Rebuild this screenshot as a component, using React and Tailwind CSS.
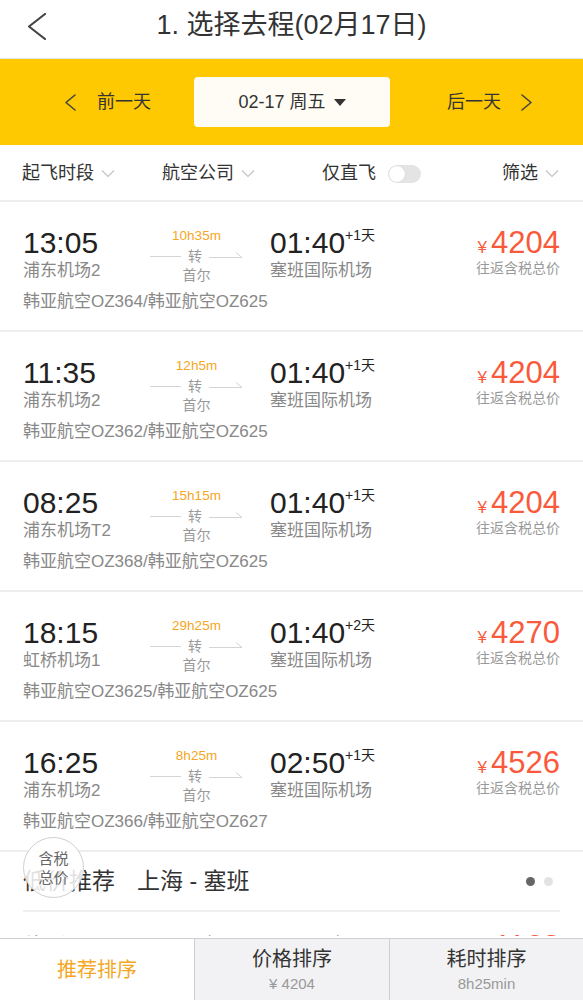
import React from "react";

const flights = [
  { dep: "13:05", depAp: "浦东机场2", dur: "10h35m", arr: "01:40", plus: "+1天", price: "4204", airline: "韩亚航空OZ364/韩亚航空OZ625" },
  { dep: "11:35", depAp: "浦东机场2", dur: "12h5m", arr: "01:40", plus: "+1天", price: "4204", airline: "韩亚航空OZ362/韩亚航空OZ625" },
  { dep: "08:25", depAp: "浦东机场T2", dur: "15h15m", arr: "01:40", plus: "+1天", price: "4204", airline: "韩亚航空OZ368/韩亚航空OZ625" },
  { dep: "18:15", depAp: "虹桥机场1", dur: "29h25m", arr: "01:40", plus: "+2天", price: "4270", airline: "韩亚航空OZ3625/韩亚航空OZ625" },
  { dep: "16:25", depAp: "浦东机场2", dur: "8h25m", arr: "02:50", plus: "+1天", price: "4526", airline: "韩亚航空OZ366/韩亚航空OZ627" },
];

const FONT = { fontFamily: '"Liberation Sans", "Noto Sans CJK SC", sans-serif' };

function SmallDown() {
  return (
    <svg width="14" height="9" viewBox="0 0 14 9" className="ml-[7px]">
      <path d="M1 1.5 L7 7.5 L13 1.5" fill="none" stroke="#c4c4c4" strokeWidth="1.2" />
    </svg>
  );
}

function Chevron({ dir = "left", w = 10, h = 17, stroke = "#444", sw = 1.8 }) {
  const d = dir === "left" ? `M${w - 1} 1 L1 ${h / 2} L${w - 1} ${h - 1}` : `M1 1 L${w - 1} ${h / 2} L1 ${h - 1}`;
  return (
    <svg width={w} height={h} viewBox={`0 0 ${w} ${h}`}>
      <path d={d} fill="none" stroke={stroke} strokeWidth={sw} strokeLinecap="round" strokeLinejoin="round" />
    </svg>
  );
}

function FlightCard({ f }) {
  return (
    <div className="h-[130px] border-t-2 border-[#eeeeee] bg-white pl-[23px] pr-[23px] pt-[26px]">
      <div className="flex">
        <div className="w-[127px]">
          <div className="text-[30px] leading-[30px] text-[#222]">{f.dep}</div>
          <div className="mt-[3px] text-[17px] leading-[20px] text-[#888]">{f.depAp}</div>
        </div>
        <div className="flex w-[93px] flex-col items-center">
          <div className="mt-[1px] text-[13.5px] leading-[14px] text-[#f5a623]">{f.dur}</div>
          <div className="mt-[4px] flex w-full items-center">
            <div className="h-[1px] flex-1 bg-[#d4d4d4]" />
            <div className="px-[7px] text-[14px] leading-[18px] text-[#999]">转</div>
            <div className="relative flex-1">
              <svg width="34" height="8" viewBox="0 0 34 8" className="block" style={{ marginTop: "-2px" }}>
                <path d="M0 6.5 L33 6.5 L27 1.5" fill="none" stroke="#d4d4d4" strokeWidth="1" />
              </svg>
            </div>
          </div>
          <div className="mt-[1px] text-[14px] leading-[18px] text-[#999]">首尔</div>
        </div>
        <div className="ml-[27px] flex-1">
          <div className="flex items-start">
            <span className="text-[30px] leading-[30px] text-[#222]">{f.arr}</span>
            <span className="mt-[-1px] text-[14px] leading-[16px] text-[#222]">{f.plus}</span>
          </div>
          <div className="mt-[3px] text-[17px] leading-[20px] text-[#888]">塞班国际机场</div>
        </div>
        <div className="flex flex-col items-end">
          <div className="flex items-baseline text-[#fa5a3c]">
            <span className="mr-[4px] text-[17px] leading-[30px]">¥</span>
            <span className="text-[31px] leading-[30px]">{f.price}</span>
          </div>
          <div className="mt-[-3px] text-[14px] leading-[17px] text-[#999]">往返含税总价</div>
        </div>
      </div>
      <div className="mt-[8px] text-[17px] leading-[20px] text-[#888]">{f.airline}</div>
    </div>
  );
}

export default function App() {
  return (
    <div className="relative h-[1000px] w-[583px] overflow-hidden bg-white" style={FONT}>
      {/* header */}
      <div className="relative flex h-[59px] justify-center border-b border-[#e6e6e6] bg-white pt-[9px]">
        <div className="absolute left-[28px] top-[13px]">
          <Chevron dir="left" w={18} h={27} stroke="#444" sw={2.2} />
        </div>
        <div className="text-[27px] leading-[32px] text-[#333]">1. 选择去程(02月17日)</div>
      </div>

      {/* date bar */}
      <div className="flex h-[86px] items-center bg-[#fec900]">
        <div className="flex w-[194px] items-center pl-[65px]">
          <Chevron dir="left" w={11} h={17} stroke="#444" sw={1.6} />
          <span className="ml-[21px] text-[18px] text-[#333]">前一天</span>
        </div>
        <div className="flex h-[50px] w-[196px] items-center justify-center rounded-[4px] bg-[#fffcf5]">
          <span className="text-[18px] text-[#333]">02-17 周五</span>
          <svg width="12" height="7" viewBox="0 0 12 7" className="ml-[8px]">
            <path d="M0 0 L12 0 L6 7 Z" fill="#333" />
          </svg>
        </div>
        <div className="flex flex-1 items-center pl-[57px]">
          <span className="text-[18px] text-[#333]">后一天</span>
          <span className="ml-[20px]">
            <Chevron dir="right" w={11} h={17} stroke="#444" sw={1.6} />
          </span>
        </div>
      </div>

      {/* filter bar */}
      <div className="flex h-[55px] items-center bg-white pt-[2px] text-[18px] text-[#333]">
        <div className="flex w-[162px] items-center pl-[22px]">
          起飞时段<SmallDown />
        </div>
        <div className="flex w-[160px] items-center">
          航空公司<SmallDown />
        </div>
        <div className="flex w-[180px] items-center">
          仅直飞
          <div className="ml-[12px] flex h-[18px] w-[33px] items-center rounded-full bg-[#e4e4e4] p-[1px]">
            <div className="h-[16px] w-[16px] rounded-full bg-white shadow-[0_0_1px_rgba(0,0,0,0.2)]" />
          </div>
        </div>
        <div className="flex items-center">
          筛选<SmallDown />
        </div>
      </div>

      {flights.map((f) => (
        <FlightCard key={f.dep} f={f} />
      ))}

      {/* recommend */}
      <div className="border-t-2 border-[#eeeeee] px-[23px]">
        <div className="flex h-[60px] items-center border-b-2 border-[#f0f0f0]">
          <span className="text-[23px] text-[#333]">低价推荐</span>
          <span className="ml-[22px] text-[23px] text-[#333]">上海 - 塞班</span>
          <div className="ml-auto mr-[7px] flex items-center gap-[9px]">
            <div className="h-[9px] w-[9px] rounded-full bg-[#666]" />
            <div className="h-[9px] w-[9px] rounded-full bg-[#e3e3e3]" />
          </div>
        </div>
        <div className="h-[24px] overflow-hidden">
          <div className="flex pt-[23px] text-[22px] leading-[24px] text-[#333]">
            <span className="w-[152px]">往返</span>
            <span className="w-[152px]">三晚</span>
            <span>直飞</span>
            <span className="ml-auto text-[31px] text-[#fa5a3c]">4163</span>
          </div>
        </div>
      </div>

      {/* badge */}
      <div className="absolute left-[23px] top-[837px] flex h-[61px] w-[61px] flex-col items-center justify-center rounded-full border border-[#d0d0d0] bg-[rgba(255,255,255,0.85)] text-[15px] leading-[19px] text-[#666]">
        <span>含税</span>
        <span>总价</span>
      </div>

      {/* bottom tabs */}
      <div className="absolute bottom-0 left-0 flex h-[62px] w-[583px] border-t border-[#cfcfcf] bg-white">
        <div className="flex w-[194px] items-center justify-center text-[20px] text-[#f5a623]">推荐排序</div>
        <div className="flex w-[195px] flex-col items-center justify-center border-l border-[#cfcfcf] bg-[#f2f2f4]">
          <span className="text-[20px] leading-[24px] text-[#333]">价格排序</span>
          <span className="mt-[4px] text-[15px] leading-[17px] text-[#999]">¥ 4204</span>
        </div>
        <div className="flex flex-1 flex-col items-center justify-center border-l border-[#cfcfcf] bg-[#f2f2f4]">
          <span className="text-[20px] leading-[24px] text-[#333]">耗时排序</span>
          <span className="mt-[4px] text-[15px] leading-[17px] text-[#999]">8h25min</span>
        </div>
      </div>
    </div>
  );
}
